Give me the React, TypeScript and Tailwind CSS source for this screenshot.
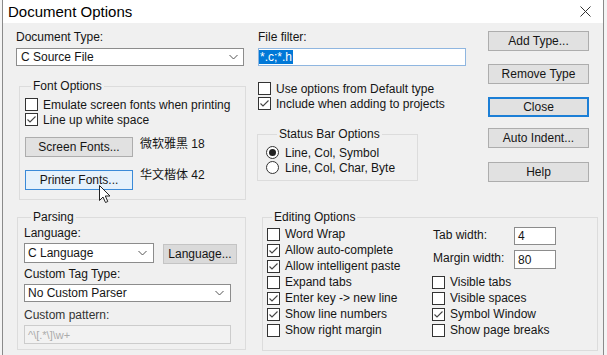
import React from "react";

const font = "font-['Liberation_Sans','Noto_Sans_CJK_SC',sans-serif]";

const CheckBox = ({ checked = false }: { checked?: boolean }) => (
  <span className="w-[13px] h-[13px] shrink-0 bg-white border border-[#333] flex items-center justify-center">
    {checked && (
      <svg width="11" height="11" viewBox="0 0 11 11">
        <polyline points="1.5,5.5 4,8 9.5,2.5" fill="none" stroke="#444" strokeWidth="1.1" />
      </svg>
    )}
  </span>
);

const Radio = ({ checked = false }: { checked?: boolean }) => (
  <span className="w-[13px] h-[13px] shrink-0 rounded-full bg-white border border-[#333] flex items-center justify-center">
    {checked && <span className="w-[7px] h-[7px] rounded-full bg-[#222]" />}
  </span>
);

const Chevron = () => (
  <svg width="9" height="6" viewBox="0 0 9 6">
    <polyline points="0.5,1 4.5,5 8.5,1" fill="none" stroke="#555" strokeWidth="1" />
  </svg>
);

const Btn = ({
  children,
  className = "",
}: {
  children: React.ReactNode;
  className?: string;
}) => (
  <div
    className={`h-[20px] flex items-center justify-center border text-[12px] leading-[14px] ${
      className || "bg-[#e1e1e1] border-[#adadad]"
    }`}
  >
    {children}
  </div>
);

const CheckRow = ({
  label,
  checked,
  h = "h-[15px]",
}: {
  label: string;
  checked?: boolean;
  h?: string;
}) => (
  <div className={`flex items-center gap-[5px] ${h}`}>
    <CheckBox checked={checked} />
    <span className="whitespace-nowrap">{label}</span>
  </div>
);

export default function App() {
  return (
    <div className={`w-[607px] h-[355px] overflow-hidden bg-[#f4f4f4] text-[12px] leading-[14px] text-[#151515] ${font}`}>
      <div className="relative ml-[2px] w-[602px] h-[355px] bg-[#f0f0f0] border-x border-[#8a8a8a]">
        {/* title bar */}
        <div className="h-[23px] bg-white flex items-center justify-between pl-[5px] pr-[12px]">
          <span className="text-[15px] leading-[18px] text-black">Document Options</span>
          <svg width="11" height="11" viewBox="0 0 11 11">
            <path d="M0.5 0.5 L10.5 10.5 M10.5 0.5 L0.5 10.5" stroke="#333" strokeWidth="1" />
          </svg>
        </div>

        {/* top row */}
        <div className="flex h-[187px] pl-[13px]">
          {/* left column */}
          <div className="w-[230px] pt-[7px]">
            <div>Document Type:</div>
            <div className="mt-[4px] w-[228px] h-[18px] bg-white border border-[#8c8c8c] flex items-center justify-between pl-[4px] pr-[5px]">
              <span>C Source File</span>
              <Chevron />
            </div>
            <fieldset className="mt-[13px] ml-[3px] w-[227px] h-[121px] border border-[#dcdcdc] pl-[5px]">
              <legend className="ml-[6px] px-[2px] leading-[14px]">Font Options</legend>
              <div className="pt-[4px]">
                <CheckRow label="Emulate screen fonts when printing" />
                <CheckRow label="Line up white space" checked />
              </div>
              <div className="mt-[10px] flex items-center gap-[7px]">
                <Btn className="w-[108px] bg-[#e1e1e1] border-[#adadad]">Screen Fonts...</Btn>
                <span className="pb-[6px]">微软雅黑 18</span>
              </div>
              <div className="mt-[11px] flex items-center gap-[7px]">
                <Btn className="w-[108px] bg-[#e5f1fb] border-[#3a8ad8]">Printer Fonts...</Btn>
                <span className="pb-[9px]">华文楷体 42</span>
              </div>
            </fieldset>
          </div>

          {/* middle column */}
          <div className="ml-[12px] w-[208px] pt-[7px]">
            <div>File filter:</div>
            <div className="mt-[4px] h-[18px] bg-white border border-[#8fb6e0] flex items-center">
              <span className="bg-[#0078d7] text-white px-[1px]">*.c;*.h</span>
            </div>
            <div className="mt-[15px]">
              <CheckRow label="Use options from Default type" />
              <CheckRow label="Include when adding to projects" checked />
            </div>
            <fieldset className="mt-[16px] -ml-[1px] w-[161px] h-[54px] border border-[#dcdcdc] pl-[8px]">
              <legend className="ml-[11px] px-[2px] leading-[14px]">Status Bar Options</legend>
              <div className="pt-[4px]">
                <div className="flex items-center gap-[6px] h-[15px]">
                  <Radio checked />
                  <span>Line, Col, Symbol</span>
                </div>
                <div className="flex items-center gap-[6px] h-[15px]">
                  <Radio />
                  <span>Line, Col, Char, Byte</span>
                </div>
              </div>
            </fieldset>
          </div>

          {/* buttons */}
          <div className="ml-[22px] w-[101px] pt-[8px] flex flex-col">
            <Btn>Add Type...</Btn>
            <Btn className="mt-[13px] bg-[#e1e1e1] border-[#adadad]">Remove Type</Btn>
            <Btn className="mt-[13px] bg-[#e1e1e1] border-2 border-[#1c7fd6]">Close</Btn>
            <Btn className="mt-[11px] bg-[#e1e1e1] border-[#adadad]">Auto Indent...</Btn>
            <Btn className="mt-[14px] bg-[#e1e1e1] border-[#adadad]">Help</Btn>
          </div>
        </div>

        {/* bottom row */}
        <div className="flex pl-[14px]">
          <fieldset className="w-[229px] h-[140px] border border-[#dcdcdc] pl-[6px]">
            <legend className="ml-[7px] px-[2px] leading-[14px]">Parsing</legend>
            <div className="pt-[2px]">Language:</div>
            <div className="mt-[3px] flex items-start">
              <div className="w-[130px] h-[20px] bg-white border border-[#8c8c8c] flex items-center justify-between pl-[3px] pr-[6px]">
                <span>C Language</span>
                <Chevron />
              </div>
              <Btn className="ml-[9px] mt-[1px] w-[74px] bg-[#dadada] border-[#c4c4c4]">Language...</Btn>
            </div>
            <div className="mt-[3px]">Custom Tag Type:</div>
            <div className="mt-[3px] w-[207px] h-[18px] bg-white border border-[#8c8c8c] flex items-center justify-between pl-[3px] pr-[6px]">
              <span>No Custom Parser</span>
              <Chevron />
            </div>
            <div className="mt-[6px] text-[#333]">Custom pattern:</div>
            <div className="mt-[3px] w-[207px] h-[19px] bg-[#f2f2f2] border border-[#cccccc] flex items-center pl-[3px] text-[#ababab] text-[11px]">
              {"^\\[.*\\]\\w+"}
            </div>
          </fieldset>

          <fieldset className="ml-[16px] w-[336px] h-[141px] border border-[#dcdcdc] pl-[4px]">
            <legend className="ml-[5px] px-[2px] leading-[14px]">Editing Options</legend>
            <div className="flex pt-[2px]">
              <div className="w-[165px] flex flex-col">
                <CheckRow h="h-[16px]" label="Word Wrap" />
                <CheckRow h="h-[16px]" label="Allow auto-complete" checked />
                <CheckRow h="h-[16px]" label="Allow intelligent paste" checked />
                <CheckRow h="h-[16px]" label="Expand tabs" />
                <CheckRow h="h-[16px]" label="Enter key -> new line" checked />
                <CheckRow h="h-[16px]" label="Show line numbers" checked />
                <CheckRow h="h-[16px]" label="Show right margin" />
              </div>
              <div className="flex flex-col">
                <div className="flex h-[18px] mt-[1px]">
                  <span className="w-[82px] pl-[1px] pt-[1px]">Tab width:</span>
                  <div className="w-[42px] h-[18px] bg-white border border-[#8c8c8c] flex items-center pl-[3px]">4</div>
                </div>
                <div className="flex h-[19px] mt-[5px]">
                  <span className="w-[82px] pl-[1px] pt-[1px]">Margin width:</span>
                  <div className="w-[42px] h-[19px] bg-white border border-[#8c8c8c] flex items-center pl-[3px]">80</div>
                </div>
                <div className="mt-[5px]">
                  <CheckRow h="h-[16px]" label="Visible tabs" />
                  <CheckRow h="h-[16px]" label="Visible spaces" />
                  <CheckRow h="h-[16px]" label="Symbol Window" checked />
                  <CheckRow h="h-[16px]" label="Show page breaks" />
                </div>
              </div>
            </div>
          </fieldset>
        </div>

        {/* mouse pointer over Printer Fonts */}
        <svg className="absolute left-[96px] top-[185px]" width="13" height="20" viewBox="0 0 13 20">
          <path d="M0.5 0.5 L0.5 15.5 L4 12 L6.5 17.5 L8.8 16.5 L6.3 11 L11 11 Z" fill="white" stroke="#222" strokeWidth="1" />
        </svg>
      </div>
    </div>
  );
}
